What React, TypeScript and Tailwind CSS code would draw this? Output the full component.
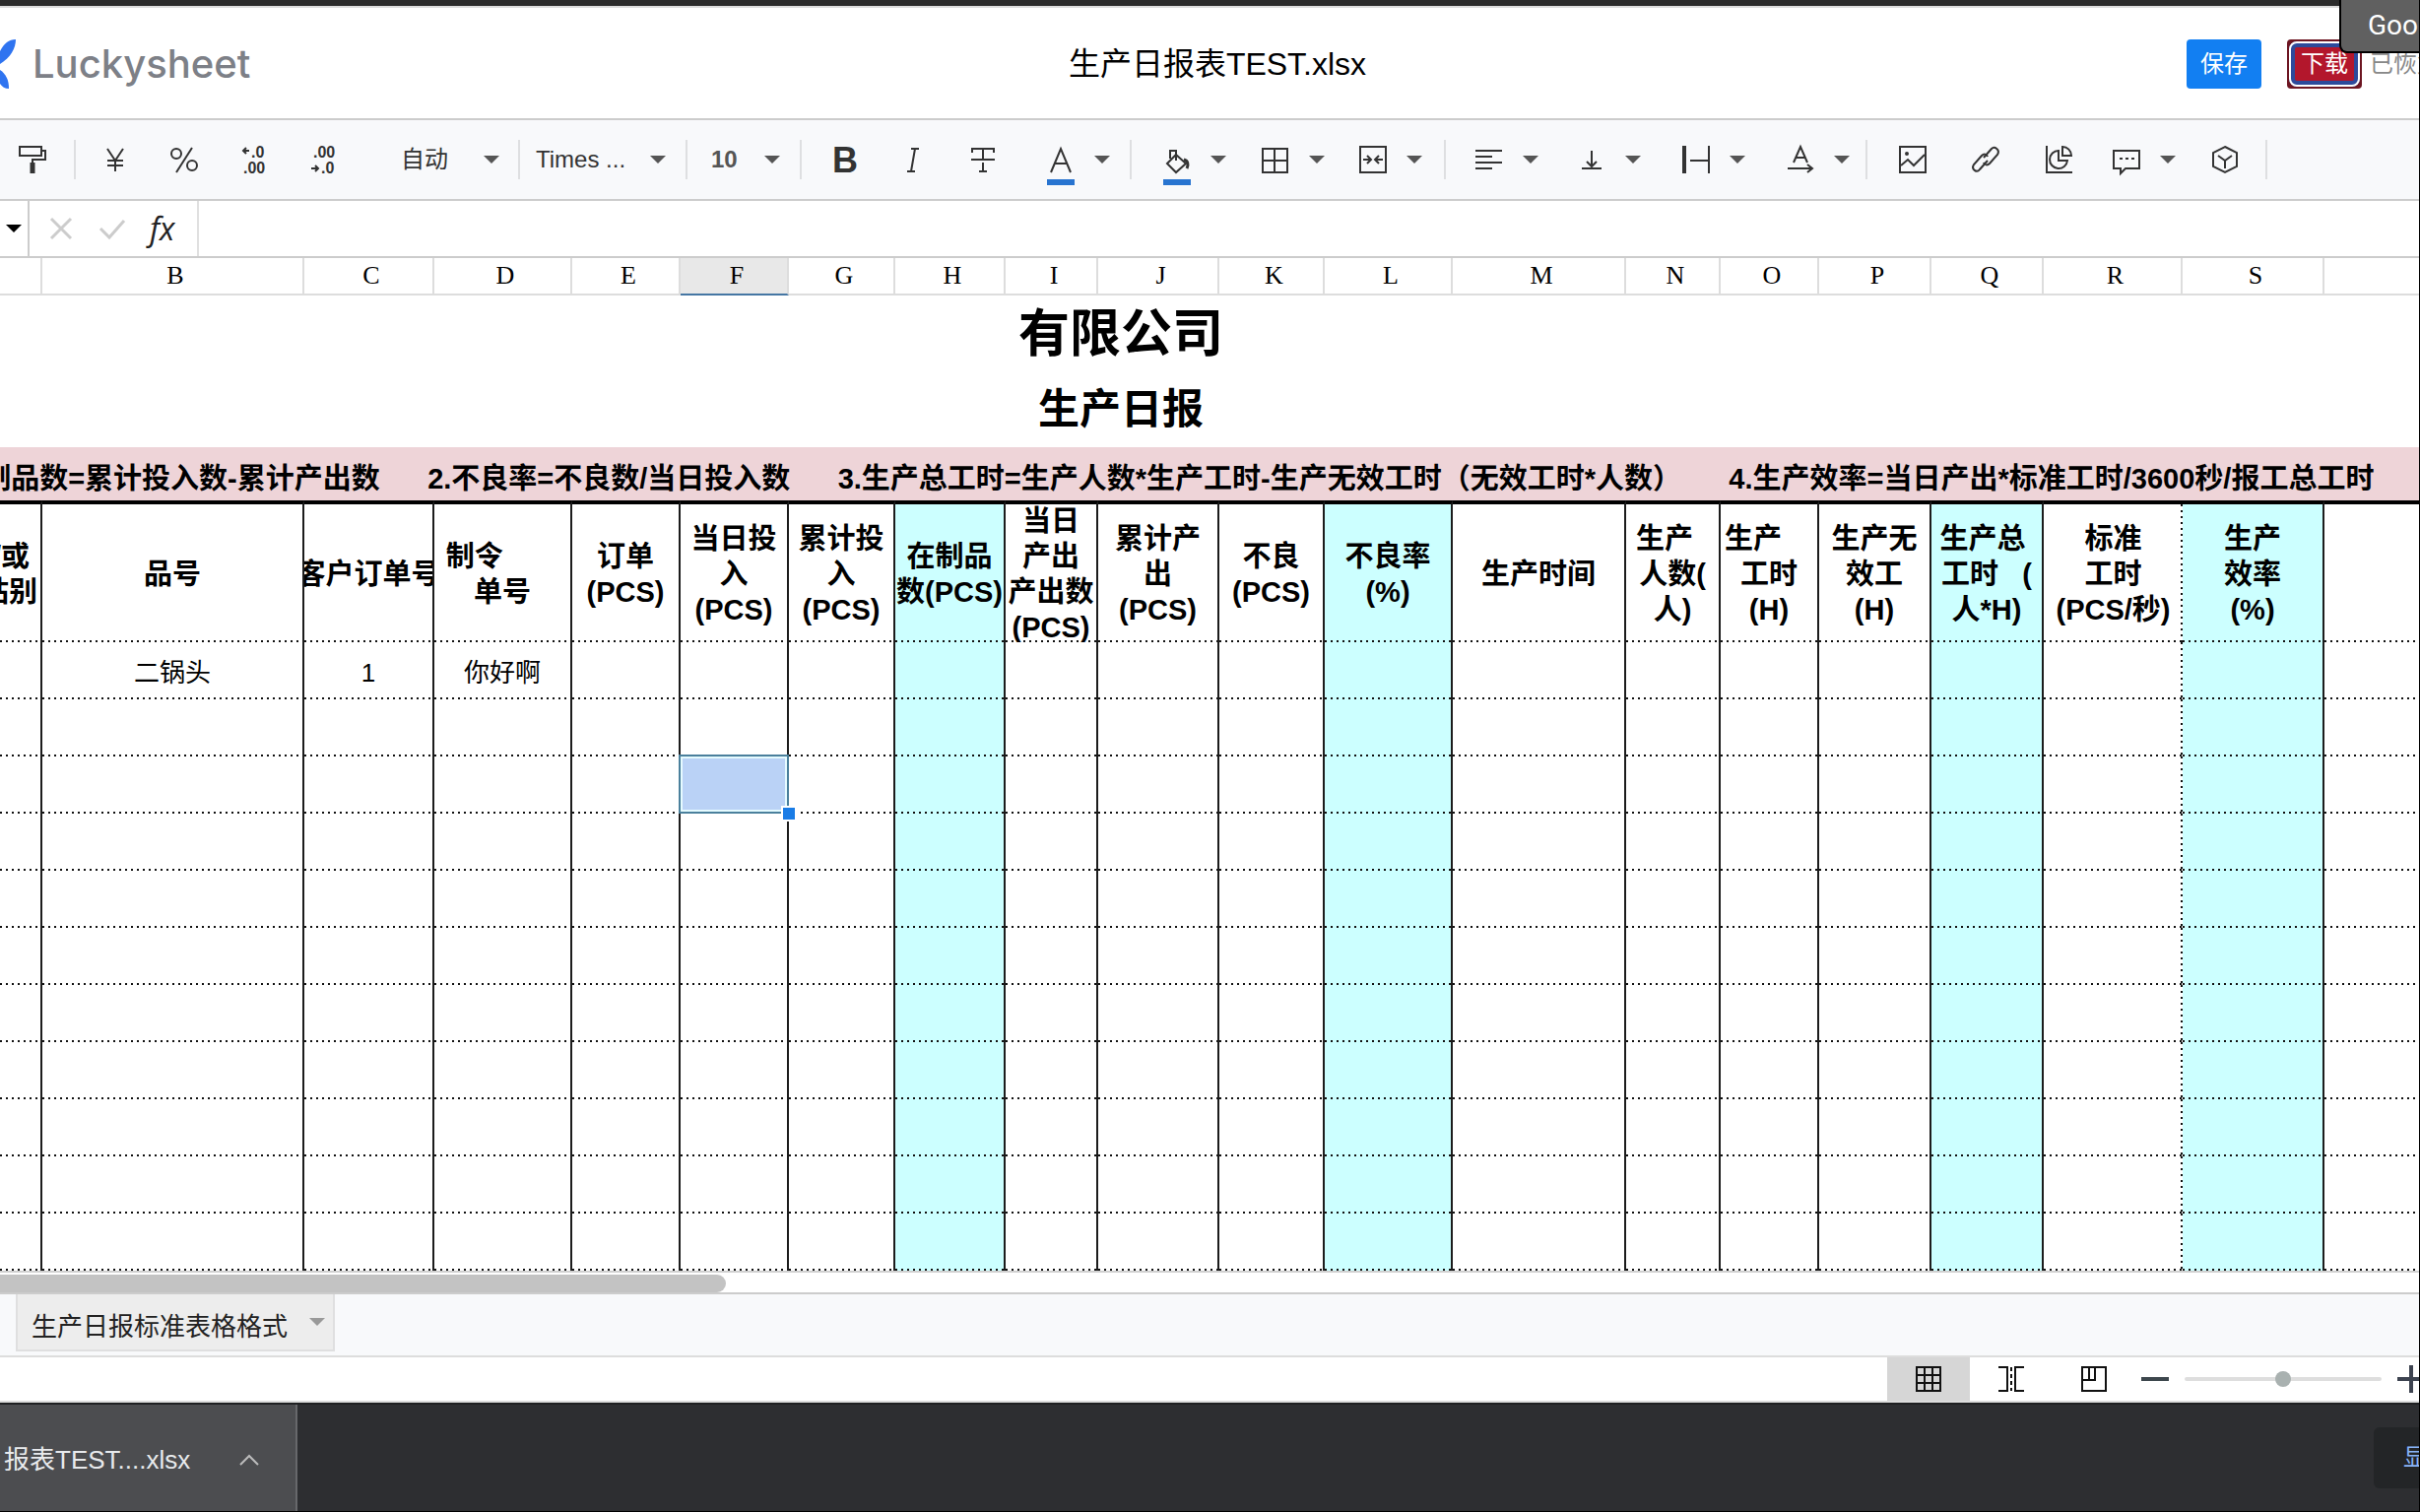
import type { ReactNode } from "react";
import clsx from "clsx";

interface Column {
  name: string;
  width: string;
  lines: string[];
  shaded?: boolean;
  dottedEdge?: boolean;
}

const columns: Column[] = [
  { name: "A", width: "w-[127px]", lines: ["/或 ", "站别"] },
  { name: "B", width: "w-[266px]", lines: ["品号"] },
  { name: "C", width: "w-[132px]", lines: ["客户订单号"] },
  { name: "D", width: "w-[140px]", lines: ["制令       ", "单号"] },
  { name: "E", width: "w-[110px]", lines: ["订单", "(PCS)"] },
  { name: "F", width: "w-[110px]", lines: ["当日投", "入", "(PCS)"] },
  { name: "G", width: "w-[108px]", lines: ["累计投", "入", "(PCS)"] },
  { name: "H", width: "w-[112px]", lines: ["在制品", "数(PCS)"], shaded: true },
  { name: "I", width: "w-[94px]", lines: ["当日", "产出", "产出数", "(PCS)"] },
  { name: "J", width: "w-[123px]", lines: ["累计产", "出", "(PCS)"] },
  { name: "K", width: "w-[107px]", lines: ["不良", "(PCS)"] },
  { name: "L", width: "w-[130px]", lines: ["不良率", "(%)"], shaded: true },
  { name: "M", width: "w-[176px]", lines: ["生产时间"] },
  { name: "N", width: "w-[96px]", lines: ["生产  ", "人数(", "人)"] },
  { name: "O", width: "w-[100px]", lines: ["生产    ", "工时", "(H)"] },
  { name: "P", width: "w-[114px]", lines: ["生产无", "效工", "(H)"] },
  { name: "Q", width: "w-[114px]", lines: ["生产总 ", "工时   (", "人*H)"], shaded: true },
  { name: "R", width: "w-[141px]", lines: ["标准", "工时", "(PCS/秒)"], dottedEdge: true },
  { name: "S", width: "w-[144px]", lines: ["生产", "效率", "(%)"], shaded: true },
];

const rows: Record<string, string>[] = [
  { B: "二锅头", C: "1", D: "你好啊" },
  {},
  {},
  {},
  {},
  {},
  {},
  {},
  {},
  {},
  {},
];

const selected = { column: "F", row: 2 };

const dotted =
  "bg-[image:repeating-linear-gradient(to_right,#111_0_2px,transparent_2px_6px)] bg-[length:100%_2px] bg-bottom bg-no-repeat";
const dottedBoth =
  "bg-[image:repeating-linear-gradient(to_right,#111_0_2px,transparent_2px_6px),repeating-linear-gradient(to_bottom,#111_0_2px,transparent_2px_6px)] bg-[length:100%_2px,2px_100%] bg-[position:bottom,right] bg-no-repeat";

const cellClass = (column: Column) =>
  clsx(
    "relative p-0 font-[inherit]",
    column.dottedEdge ? dottedBoth : dotted,
    !column.dottedEdge && "border-r-2 border-[#1c1c1c]",
    column.shaded && "bg-[#ccffff]"
  );

const Icon = ({ children }: { children: ReactNode }) => (
  <svg
    viewBox="0 0 28 28"
    className="h-7 w-7 shrink-0 overflow-visible"
    fill="none"
    stroke="#333"
    strokeWidth="2"
  >
    {children}
  </svg>
);

const Caret = ({ className = "text-[#555]" }: { className?: string }) => (
  <svg viewBox="0 0 16 8" className={clsx("h-2 w-4 shrink-0", className)}>
    <path d="M0 0h16L8 8z" fill="currentColor" />
  </svg>
);

const Divider = ({ className }: { className: string }) => (
  <div className={clsx("h-10 w-0.5 shrink-0 bg-[#dedfe1]", className)} />
);

interface ToolProps {
  label: string;
  className?: string;
  menu?: boolean;
  bar?: boolean;
  children: ReactNode;
}

const Tool = ({ label, className, menu, bar, children }: ToolProps) => (
  <button
    type="button"
    aria-label={label}
    className={clsx("relative flex shrink-0 items-center", menu && "w-16 justify-between", className)}
  >
    <Icon>{children}</Icon>
    {menu && <Caret />}
    {bar && <span className="absolute top-[34px] left-0 h-1.5 w-7 bg-[#2874d0]" />}
  </button>
);

interface PickerProps {
  label: string;
  value: string;
  className: string;
}

const Picker = ({ label, value, className }: PickerProps) => (
  <div className="flex shrink-0 items-center">
    <select
      aria-label={label}
      className={clsx("appearance-none text-2xl leading-8", className)}
    >
      <option>{value}</option>
    </select>
    <Caret />
  </div>
);

const Header = () => (
  <header className="flex h-[114px] items-center border-b-2 border-[#ccc] pt-0.5">
    <div className="flex flex-1 items-center">
      <svg viewBox="0 0 17 52" className="h-[52px] w-[17px]" fill="#2f74f0">
        <path d="M0 13C4 5 9 1 16 1c0 9-5 18-16 25z" />
        <path d="M0 32c6 4 9 10 9 19-4 0-7-2-9-5z" />
      </svg>
      <span className="ml-4 font-[Inter] text-[40px] leading-none font-medium text-[#7d8087]">
        Luckysheet
      </span>
    </div>
    <h1 className="pl-4 text-[32px] text-black">生产日报表TEST.xlsx</h1>
    <div className="flex flex-1 items-center justify-end text-2xl">
      <button type="button" className="h-[50px] w-[76px] rounded bg-[#127ff2] text-white">
        保存
      </button>
      <div className="ml-[26px] rounded bg-[#6d1622] p-0.5">
        <button
          type="button"
          className="h-[46px] w-[72px] rounded-lg border-6 border-[#2d4a9b] bg-[#b3172c] text-white outline-2 -outline-offset-2 outline-white"
        >
          下载
        </button>
      </div>
      <span className="ml-2 w-[50px] overflow-hidden whitespace-nowrap text-[#888]">已恢复</span>
    </div>
  </header>
);

const Toolbar = () => (
  <div className="flex h-[82px] items-center overflow-hidden border-b-2 border-[#ccc] bg-[#f8f9fb] pl-[19px]">
    <Tool label="格式刷">
      <path d="M1 1h22v9H1zM23 5h4v9H14v3" />
      <path d="M14 17v11" strokeWidth="5" />
    </Tool>
    <Divider className="ml-7" />
    <Tool label="货币格式" className="ml-[26px]">
      <path d="M6 3l8 12 8-12M14 15v11M6 15h16M6 20h16" />
    </Tool>
    <Tool label="百分比格式" className="ml-[42px]">
      <circle cx="6" cy="8" r="5" />
      <circle cx="22" cy="20" r="5" />
      <path d="M22 2L6 27" />
    </Tool>
    <Tool label="减少小数位数" className="ml-[43px]">
      <path d="M9 5H3M6 2L3 5l3 3" />
      <text x="11" y="12" fontSize="16" fontWeight="bold" fill="#333" stroke="none">.0</text>
      <text x="3" y="28" fontSize="16" fontWeight="bold" fill="#333" stroke="none">.00</text>
    </Tool>
    <Tool label="增加小数位数" className="ml-[43px]">
      <text x="3" y="12" fontSize="16" fontWeight="bold" fill="#333" stroke="none">.00</text>
      <path d="M1 23h7M5 20l3 3-3 3" />
      <text x="11" y="28" fontSize="16" fontWeight="bold" fill="#333" stroke="none">.0</text>
    </Tool>
    <div className="ml-16">
      <Picker label="数字格式" value="自动" className="w-[84px] text-[#333]" />
    </div>
    <Divider className="ml-[19px]" />
    <div className="ml-4">
      <Picker label="字体" value="Times ..." className="w-[116px] text-[#333]" />
    </div>
    <Divider className="ml-5" />
    <div className="ml-6">
      <Picker label="字号" value="10" className="w-[54px] font-bold text-[#555]" />
    </div>
    <Divider className="ml-5" />
    <Tool label="粗体" className="ml-[29px]">
      <text x="2" y="27" fontSize="36" fontWeight="bold" fill="#333" stroke="none">B</text>
    </Tool>
    <Tool label="斜体" className="ml-[42px]">
      <path d="M12 3h8M8 26h8M16 3l-4 23" />
    </Tool>
    <Tool label="删除线" className="ml-[43px]">
      <path d="M3 7V3h22v4M14 3v10M2 14h24M14 17v9M10 26h8" />
    </Tool>
    <Tool label="文本颜色" className="ml-[51px]" menu bar>
      <path d="M4 27L14 3l10 24M8 18h12" />
    </Tool>
    <Divider className="ml-5" />
    <Tool label="单元格颜色" className="ml-8" menu bar>
      <path d="M13 9l10 9-10 9-9-9zM7 13V5h6v10" />
      <path d="M21 14c4 1 5 5 3 9" strokeWidth="3" />
    </Tool>
    <Tool label="边框" className="ml-9" menu>
      <path d="M1 3h25v24H1zM1 15h25M13 3v24" />
    </Tool>
    <Tool label="合并单元格" className="ml-[35px]" menu>
      <path d="M1 1h26v26H1zM4 14h7M8 10l4 4-4 4M24 14h-7M20 10l-4 4 4 4" />
    </Tool>
    <Divider className="ml-[22px]" />
    <Tool label="水平对齐" className="ml-[30px]" menu>
      <path d="M0 5h27M0 11h17M0 17h27M0 23h17" />
    </Tool>
    <Tool label="垂直对齐" className="ml-10" menu>
      <path d="M14 5v16M9 16l5 5 5-5M4 23h20" />
    </Tool>
    <Tool label="文本换行" className="ml-[42px]" menu>
      <path d="M2 0v28" strokeWidth="4" />
      <path d="M27 0v28M8 15h18" />
    </Tool>
    <Tool label="文本旋转" className="ml-[42px]" menu>
      <path d="M7 17l7-16 7 16M9 12h10M1 23h25M21 19l5 4-5 4" />
    </Tool>
    <Divider className="ml-4" />
    <Tool label="插入图片" className="ml-8">
      <path d="M1 1h26v26H1zM2 20l7-6 6 6 11-11" />
      <circle cx="8" cy="8" r="1" />
    </Tool>
    <Tool label="插入链接" className="ml-[46px]">
      <path d="M12 12l8-9c3-3 9 1 6 6l-8 9c-2 2-5 2-6-1" />
      <path d="M16 15l-8 9c-3 4-9 0-6-5l8-9c2-2 5-2 6 1" />
    </Tool>
    <Tool label="图表" className="ml-[47px]">
      <path d="M1 0v27h26M13 5a9 9 0 1 0 9 10h-9zM17 1v9h9c0-5-4-9-9-9z" />
    </Tool>
    <Tool label="批注" className="ml-10" menu>
      <path d="M1 5h26v18H13l-5 5v-5H1z" />
      <path d="M7 13h3M13 13h3M19 13h3" />
    </Tool>
    <Tool label="数据透视表" className="ml-9">
      <path d="M14 1l12 6v14l-12 6-12-6V7zM7 10l7 5 7-5M14 15v8" />
    </Tool>
    <Divider className="ml-[27px]" />
  </div>
);

const FormulaBar = () => (
  <div className="flex h-[58px] items-center border-b-2 border-[#ccc]">
    <button type="button" aria-label="名称框" className="flex h-full w-[30px] items-center justify-center border-r-2 border-[#ccc]">
      <Caret className="text-black" />
    </button>
    <button type="button" aria-label="取消" className="ml-[18px]">
      <Icon>
        <path d="M4 4l20 20M24 4L4 24" stroke="#ccc" strokeWidth="3" />
      </Icon>
    </button>
    <button type="button" aria-label="确认" className="ml-6">
      <Icon>
        <path d="M2 14l9 9L26 6" stroke="#ccc" strokeWidth="3" />
      </Icon>
    </button>
    <label
      htmlFor="formula"
      className="ml-6 flex h-full w-[50px] items-center border-r-2 border-[#e0e0e0] font-['Open_Sans'] text-[32px] text-[#222] italic"
    >
      fx
    </label>
    <input id="formula" type="text" className="h-full min-w-0 flex-1 px-3 text-2xl outline-none" />
  </div>
);

const Sheet = () => (
  <div className="overflow-hidden border-b-2 border-[#d0d0d0]">
    <div className="-ml-[84px]">
      <table className="w-full table-fixed border-separate border-spacing-0 text-black">
        <colgroup>
          {columns.map((column) => (
            <col key={column.name} className={column.width} />
          ))}
          <col />
        </colgroup>
        <thead className="font-['Liberation_Serif'] text-[26px] leading-8">
          <tr className="h-[38px]">
            {columns.map((column) => (
              <th
                key={column.name}
                className={clsx(
                  "border-r-2 border-b-2 p-0 pl-1.5 font-normal",
                  column.name === selected.column
                    ? "border-r-[#ddd] border-b-[#4576a3] bg-[#e8e8e8]"
                    : "border-[#ddd]"
                )}
              >
                {column.name === "A" ? "" : column.name}
              </th>
            ))}
            <th className="border-b-2 border-[#ddd] p-0" />
          </tr>
        </thead>
        <tbody>
          <tr className="h-[78px]">
            <td colSpan={19} className="p-0 text-center text-[52px] leading-[76px] font-bold">
              有限公司
            </td>
            <td />
          </tr>
          <tr className="h-[76px]">
            <td colSpan={19} className="p-0 text-center text-[42px] leading-[76px] font-bold">
              生产日报
            </td>
            <td />
          </tr>
          <tr className="h-[54px]">
            <td
              colSpan={20}
              className="bg-[#eed4d8] p-0 pt-2.5 pl-[13px] text-[29px] leading-[44px] font-bold whitespace-pre"
            >
              1.在制品数=累计投入数-累计产出数{"      "}2.不良率=不良数/当日投入数{"      "}
              3.生产总工时=生产人数*生产工时-生产无效工时（无效工时*人数）{"      "}
              4.生产效率=当日产出*标准工时/3600秒/报工总工时
            </td>
          </tr>
          <tr className="text-[29px] leading-9 font-bold">
            {columns.map((column) => (
              <td key={column.name} className={clsx(cellClass(column), "border-t-4 border-t-black")}>
                <div
                  className={clsx(
                    "flex h-[140px] flex-col justify-center overflow-hidden pt-0.5 whitespace-pre",
                    column.name === "A" ? "items-end pr-[3px]" : "items-center"
                  )}
                >
                  {column.lines.map((line, i) => (
                    <span key={i}>{line}</span>
                  ))}
                </div>
              </td>
            ))}
            <td className={clsx(dotted, "border-t-4 border-black p-0")} />
          </tr>
          {rows.map((row, r) => (
            <tr key={r} className="h-[58px] text-center text-[26px] leading-9">
              {columns.map((column) => (
                <td key={column.name} className={clsx(cellClass(column), "pt-1")}>
                  {row[column.name]}
                  {column.name === selected.column && r === selected.row && (
                    <div className="absolute -top-0.5 -right-0.5 bottom-0 -left-0.5 z-10 border-2 border-[#4a809c] bg-[#bad2f6] inset-ring-2 inset-ring-[#e6fbff]">
                      <span className="absolute -right-2.5 -bottom-2.5 h-4 w-4 border-2 border-white bg-[#197ce6]" />
                    </div>
                  )}
                </td>
              ))}
              <td className={clsx(dotted, "p-0")} />
            </tr>
          ))}
        </tbody>
      </table>
    </div>
  </div>
);

const SheetTabs = () => (
  <div className="flex h-16 items-start border-b-2 border-[#ddd] bg-[#f8f9fb] pl-4">
    <button
      type="button"
      className="flex h-[58px] items-center gap-[22px] border-2 border-t-0 border-[#dfdfe0] bg-[#ededed] pr-2 pl-3.5 text-[26px] text-[#222]"
    >
      <span className="pt-2.5">生产日报标准表格格式</span>
      <Caret className="text-[#999]" />
    </button>
  </div>
);

const StatusBar = () => (
  <div className="flex h-[46px] items-center justify-end border-b-2 border-[#ddd]">
    <button type="button" aria-label="普通视图" className="flex h-full w-[84px] items-center justify-center bg-[#d6d6d6]">
      <svg viewBox="0 0 26 26" className="h-[26px] w-[26px]" fill="none" stroke="#111" strokeWidth="2">
        <path d="M1 1h24v24H1zM9 1v24M17 1v24M1 9h24M1 17h24" />
      </svg>
    </button>
    <button type="button" aria-label="分页预览" className="flex h-full w-[84px] items-center justify-center">
      <svg viewBox="0 0 26 26" className="h-[26px] w-[26px]" fill="none" stroke="#111" strokeWidth="2">
        <path d="M0 1h9v24H0M26 1h-9v24h9" />
        <path d="M13 1v24" strokeDasharray="4 3" />
      </svg>
    </button>
    <button type="button" aria-label="页面布局" className="flex h-full w-[84px] items-center justify-center">
      <svg viewBox="0 0 26 26" className="h-[26px] w-[26px]" fill="none" stroke="#111" strokeWidth="2">
        <path d="M1 1h24v24H1zM8 1v13M1 14h13V1" />
      </svg>
    </button>
    <button type="button" aria-label="缩小" className="ml-1.5 py-3">
      <div className="h-1 w-7 bg-[#3d474d]" />
    </button>
    <input
      type="range"
      aria-label="缩放"
      defaultValue={50}
      className="ml-4 h-4 w-[200px] appearance-none bg-transparent [&::-webkit-slider-runnable-track]:h-1 [&::-webkit-slider-runnable-track]:rounded-full [&::-webkit-slider-runnable-track]:bg-[#dedede] [&::-webkit-slider-thumb]:-mt-1.5 [&::-webkit-slider-thumb]:h-4 [&::-webkit-slider-thumb]:w-4 [&::-webkit-slider-thumb]:appearance-none [&::-webkit-slider-thumb]:rounded-full [&::-webkit-slider-thumb]:bg-[#a9b1b0]"
    />
    <button type="button" aria-label="放大" className="ml-4 w-[22px] overflow-hidden">
      <svg viewBox="0 0 28 28" className="h-7 w-7" stroke="#3d4350" strokeWidth="4">
        <path d="M0 14h28M14 0v28" />
      </svg>
    </button>
  </div>
);

const DownloadShelf = () => (
  <footer className="flex h-[111px] items-center border-t-2 border-b border-t-[#1f2022] border-b-black bg-[#2d2e31]">
    <div className="flex h-full w-[302px] items-center border-r-2 border-[#67686b] bg-[#4c4d50] pt-1 pl-1">
      <span className="text-[26px] text-[#e8eaed]">报表TEST....xlsx</span>
      <button type="button" aria-label="更多" className="ml-auto pr-[37px]">
        <svg viewBox="0 0 20 12" className="h-3 w-5" fill="none" stroke="#bbb" strokeWidth="2">
          <path d="M1 11l9-9 9 9" />
        </svg>
      </button>
    </div>
    <button
      type="button"
      className="ml-auto h-[62px] w-[46px] overflow-hidden rounded-l-md bg-[#232527] pl-[30px] text-left text-2xl whitespace-nowrap text-[#8ab4f8]"
    >
      显示
    </button>
  </footer>
);

export default function App() {
  return (
    <div className="relative min-h-screen overflow-hidden border-r border-black bg-white font-['Liberation_Sans','Noto_Sans_CJK_SC',sans-serif]">
      <div className="h-2 border-b-2 border-[#ddd] bg-[#2b2b2b]" />
      <Header />
      <Toolbar />
      <FormulaBar />
      <Sheet />
      <div className="border-b-2 border-[#ccc] pt-0.5">
        <div className="h-[18px] w-[30%] rounded-r-full bg-[#c3c3c3]" />
      </div>
      <SheetTabs />
      <StatusBar />
      <DownloadShelf />
      <div
        role="tooltip"
        className="absolute top-0 right-0 h-[54px] w-[81px] overflow-hidden rounded-bl-lg border-b-2 border-l-2 border-black bg-[#606060] pl-[27px] font-[Roboto] text-[28px] leading-[52px] text-white"
      >
        Goo
      </div>
    </div>
  );
}
